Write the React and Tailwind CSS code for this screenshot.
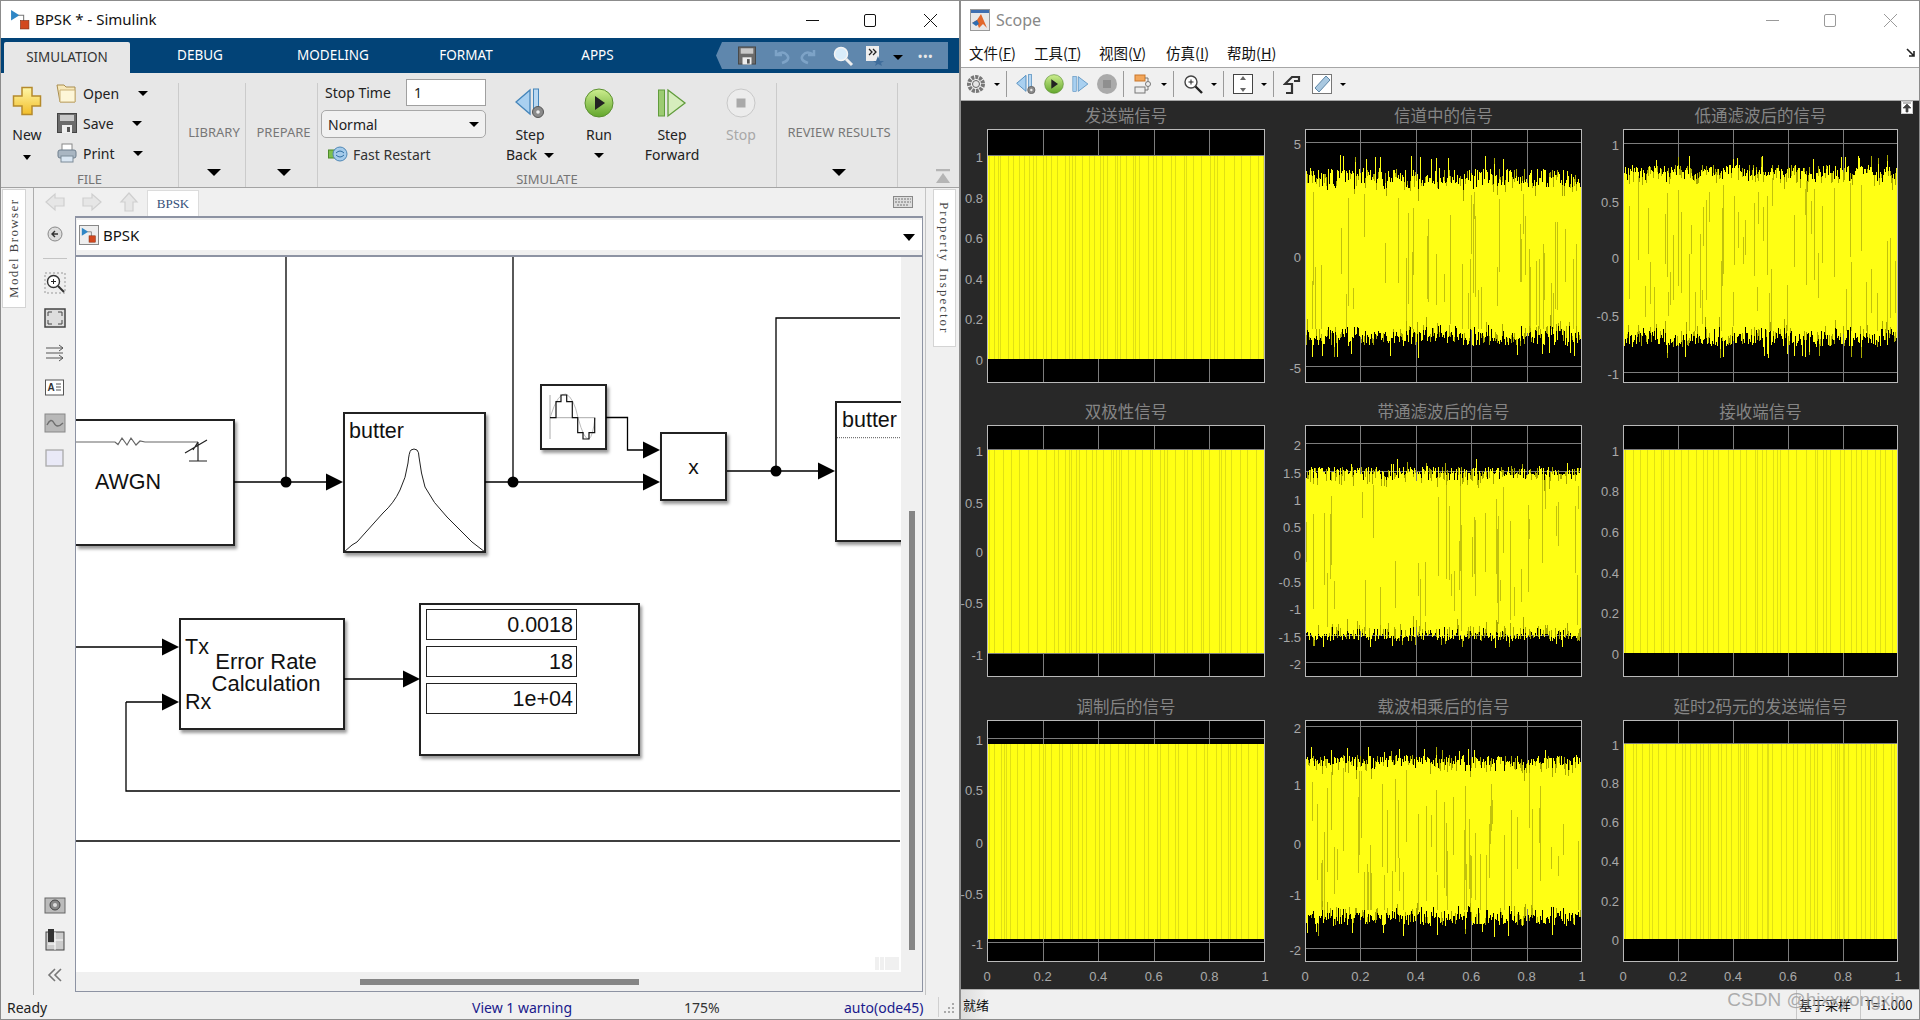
import { useMemo } from "react";

const rng = (seed) => {
    let s = seed;
    return () => {
        s = (s * 16807) % 2147483647;
        return s / 2147483647;
    };
};

const Caret = ({ className = "border-x-[5px] border-t-[5px]" }) => (
    <span className={`inline-block w-0 h-0 border-x-transparent border-t-black ${className}`} />
);

const BigCaret = () => <Caret className="border-x-[7px] border-t-[7px]" />;

/* ---------- icons ---------- */
const SimulinkLogo = ({ s = 20 }) => (
    <svg width={s} height={s} viewBox="0 0 20 20">
        <path d="M1 1 L9 6 L1 11 Z" fill="#2f86c5" />
        <path d="M8 6 H13 V12" stroke="#777" fill="none" />
        <rect x="10" y="11" width="8" height="8" fill="#d2481f" stroke="#7d2a10" strokeWidth="0.6" />
    </svg>
);

const MatlabLogo = () => (
    <svg width="20" height="22" viewBox="0 0 20 22">
        <rect x="0.5" y="0.5" width="19" height="21" fill="#e8e8e8" stroke="#999" />
        <rect x="1" y="1" width="18" height="3" fill="#3f6fb0" />
        <path d="M2 14 L7 11 L11 5 L17 19 L13 15 L9 19 L7 14 Z" fill="#e2672a" />
        <path d="M2 14 L7 11 L9 15 L6 17 Z" fill="#2f6db0" />
    </svg>
);

const WinControls = ({ color }) => (
    <div className="flex items-center">
        <svg width="58" height="16" viewBox="0 0 58 16"><path d="M0 8.5 H13" stroke={color} /></svg>
        <svg width="59" height="16" viewBox="0 0 59 16"><rect x="0.5" y="2.5" width="11" height="12" rx="1.5" fill="none" stroke={color} /></svg>
        <svg width="24" height="16" viewBox="0 0 24 16"><path d="M1 2 L14 15 M14 2 L1 15" stroke={color} /></svg>
    </div>
);

const NewIcon = () => (
    <svg width="30" height="30" viewBox="0 0 30 30">
        <defs>
            <linearGradient id="plus" x1="0" y1="0" x2="0" y2="1">
                <stop offset="0" stopColor="#fff7a8" />
                <stop offset="1" stopColor="#f2bd28" />
            </linearGradient>
        </defs>
        <path d="M10 1.5 H20 V10 H28.5 V20 H20 V28.5 H10 V20 H1.5 V10 H10 Z" fill="url(#plus)" stroke="#b58a2c" strokeWidth="1.5" />
    </svg>
);

const FolderIcon = () => (
    <svg width="21" height="19" viewBox="0 0 21 19">
        <path d="M1 1 H8 L10 3 H19 V18 H4 Z" fill="#f7e8ba" stroke="#a98d4f" />
        <path d="M4 6 H19 V18 H4 Z" fill="#fdf6d8" stroke="#c9b077" />
    </svg>
);

const SaveIcon = ({ w = 20, h = 20 }) => (
    <svg width={w} height={h} viewBox="0 0 20 20">
        <rect x="0.5" y="0.5" width="19" height="19" fill="#6b6b6b" stroke="#444" />
        <rect x="3" y="2" width="14" height="6" fill="#c9c9c9" />
        <rect x="5" y="12" width="10" height="8" fill="#eee" />
        <rect x="10" y="14" width="3" height="5" fill="#555" />
    </svg>
);

const PrintIcon = () => (
    <svg width="20" height="20" viewBox="0 0 20 20">
        <rect x="5" y="1" width="10" height="7" fill="#fff" stroke="#888" />
        <rect x="1" y="7" width="18" height="8" rx="2" fill="#a9b6c2" stroke="#6f7f8d" />
        <rect x="4" y="13" width="12" height="6" fill="#d9e6f2" stroke="#7d8b98" />
    </svg>
);

const FastRestartIcon = () => (
    <svg width="20" height="18" viewBox="0 0 20 18">
        <rect x="0.5" y="5" width="6" height="8" fill="#7fbf4d" stroke="#4d8a2b" />
        <circle cx="12" cy="9" r="7" fill="#a5cbea" stroke="#4f87b5" />
        <path d="M8 8 Q12 4 16 8 M16 10 Q12 14 8 10" stroke="#2f6da0" fill="none" />
    </svg>
);

const StepBackIcon = ({ w = 30, h = 30 }) => (
    <svg width={w} height={h} viewBox="0 0 30 30">
        <path d="M1 14 L15 2 V26 Z" fill="#a9d0f0" stroke="#4585ba" strokeWidth="1.3" />
        <rect x="18.5" y="1" width="5" height="20" fill="#b9d8f2" stroke="#4585ba" />
        <circle cx="23" cy="24" r="5.5" fill="#8a8a8a" stroke="#555" />
        <circle cx="23" cy="24" r="1.8" fill="#eee" />
    </svg>
);

const RunIcon = ({ s = 30 }) => (
    <svg width={s} height={s} viewBox="0 0 30 30">
        <defs>
            <linearGradient id="run" x1="0" y1="0" x2="0" y2="1">
                <stop offset="0" stopColor="#cdee8f" />
                <stop offset="1" stopColor="#62a62c" />
            </linearGradient>
        </defs>
        <circle cx="15" cy="15" r="14" fill="url(#run)" stroke="#5b9030" />
        <path d="M11 8 L21 15 L11 22 Z" fill="#222" />
    </svg>
);

const StepForwardIcon = ({ w = 30, h = 30, fill = "#d6edbd", stroke = "#619c3c", bar = "#9ccb72" }) => (
    <svg width={w} height={h} viewBox="0 0 30 30">
        <rect x="1.5" y="2" width="6" height="26" fill={bar} stroke={stroke} />
        <path d="M11 2 L28 15 L11 28 Z" fill={fill} stroke={stroke} strokeWidth="1.3" />
    </svg>
);

const StopIcon = () => (
    <svg width="30" height="30" viewBox="0 0 30 30">
        <circle cx="15" cy="15" r="14" fill="#ececec" stroke="#c8c8c8" />
        <rect x="10.5" y="10.5" width="9" height="9" fill="#a9a9a9" />
    </svg>
);

const NavArrow = ({ d }) => (
    <svg width="22" height="22" viewBox="0 0 22 22">
        <path d={d} fill="#e6e6e6" stroke="#cfcfcf" strokeWidth="1.2" />
    </svg>
);

const ToolIcon = ({ children }) => (
    <div className="flex h-[35px] items-center justify-center">
        <svg width="22" height="22" viewBox="0 0 22 22">{children}</svg>
    </div>
);

/* ---------- ribbon ---------- */
const Divider = () => <div className="w-px mt-[10px] bg-[#cbcbcb]" />;

const SectionLabel = ({ children }) => (
    <div className="h-[16px] text-[13px] leading-[16px] text-center text-[#757575]">{children}</div>
);

const FileRow = ({ icon, label, caretW, children }) => (
    <div className="flex items-center h-[30px]">
        <div className="w-[21px] flex justify-center">{icon}</div>
        <span className={`ml-[6px] text-[#222] ${caretW}`}>{label}</span>
        {children}
    </div>
);

const CollapsedSection = ({ width, label }) => (
    <div className={`flex flex-col items-center pt-[49px] pl-[4px] ${width}`}>
        <span className="h-[20px] text-[13px] leading-[20px] text-[#777] whitespace-nowrap">{label}</span>
        <div className="mt-[22px] leading-none"><BigCaret /></div>
    </div>
);

const RunButton = ({ width, icon, line1, line2, disabled }) => (
    <div className={`flex flex-col items-center pt-[15px] text-center ${width} ${disabled ? "text-[#a8a8a8]" : "text-[#222]"}`}>
        <div className="h-[37px]">{icon}</div>
        <div className="h-[20px] leading-[20px]">{line1}</div>
        <div className="h-[20px] leading-[20px] whitespace-nowrap flex items-center justify-center gap-[7px]">{line2}</div>
    </div>
);

const Ribbon = () => (
    <div className="flex h-[115px] bg-[#e7e7e7] border-b border-[#a3a3a3] text-[14px] shrink-0">
        <div className="flex flex-col w-[177px] shrink-0">
            <div className="flex flex-1">
                <div className="flex flex-col items-center w-[52px] pt-[13px]">
                    <NewIcon />
                    <span className="mt-[9px] h-[20px] leading-[20px] text-[#222]">New</span>
                    <div className="mt-[3px] leading-none"><Caret className="border-x-[4px] border-t-[5px]" /></div>
                </div>
                <div className="ml-[3px] pt-[5px]">
                    <FileRow icon={<FolderIcon />} label="Open" caretW="w-[55px]"><Caret /></FileRow>
                    <FileRow icon={<SaveIcon />} label="Save" caretW="w-[49px]"><Caret /></FileRow>
                    <FileRow icon={<PrintIcon />} label="Print" caretW="w-[50px]"><Caret /></FileRow>
                </div>
            </div>
            <SectionLabel>FILE</SectionLabel>
        </div>
        <Divider />
        <CollapsedSection width="w-[66px]" label="LIBRARY" />
        <Divider />
        <CollapsedSection width="w-[71px]" label="PREPARE" />
        <Divider />
        <div className="flex flex-col w-[458px] shrink-0">
            <div className="flex flex-1">
                <div className="w-[165px] ml-[3px] pt-[6px] shrink-0">
                    <div className="flex items-center h-[27px]">
                        <span className="ml-[4px] w-[81px] text-[#222] whitespace-nowrap">Stop Time</span>
                        <div className="w-[80px] h-[27px] pl-[7px] leading-[25px] bg-white border border-[#a0a0a0] text-[#222]">1</div>
                    </div>
                    <div className="flex items-center justify-between h-[28px] mt-[4px] px-[6px] rounded-[5px] border border-[#a8a8a8] bg-[#f1f1f1] text-[#222]">
                        Normal
                        <Caret />
                    </div>
                    <div className="flex items-center h-[20px] mt-[6px] pl-[7px]">
                        <FastRestartIcon />
                        <span className="ml-[5px] text-[#333]">Fast Restart</span>
                    </div>
                </div>
                <div className="w-[9px] shrink-0" />
                <RunButton width="w-[70px]" icon={<StepBackIcon />} line1="Step" line2={<>Back<Caret /></>} />
                <RunButton width="w-[68px]" icon={<RunIcon />} line1="Run" line2={<Caret />} />
                <RunButton width="w-[78px]" icon={<StepForwardIcon />} line1="Step" line2="Forward" />
                <RunButton width="w-[60px]" icon={<StopIcon />} line1="Stop" disabled />
            </div>
            <SectionLabel>SIMULATE</SectionLabel>
        </div>
        <Divider />
        <CollapsedSection width="w-[120px]" label="REVIEW RESULTS" />
        <Divider />
        <div className="flex-1 flex justify-end items-end pr-[8px] pb-[3px]">
            <svg width="16" height="15" viewBox="0 0 16 15">
                <path d="M1 1 H15" stroke="#b5b5b5" strokeWidth="2.5" />
                <path d="M8 4 L15 14 H1 Z" fill="#b5b5b5" />
            </svg>
        </div>
    </div>
);

const QuickAccess = () => (
    <div className="w-[232px] h-[27px] mt-[4px] mr-[11px] bg-[#5f87ad] flex items-center [clip-path:polygon(6px_0,100%_0,100%_100%,6px_100%,0_50%)]">
        <div className="ml-[22px]"><SaveIcon w={18} h={19} /></div>
        <svg className="ml-[15px]" width="50" height="18" viewBox="0 0 50 18" fill="none" stroke="#7da3c7" strokeWidth="2.5">
            <path d="M5 3 V8 H11 M5 8 Q12 3 16 8 T11 16" />
            <path d="M43 3 V8 H37 M43 8 Q36 3 32 8 T37 16" />
        </svg>
        <svg className="ml-[11px]" width="22" height="22" viewBox="0 0 22 22" fill="none">
            <circle cx="9" cy="9" r="6.5" fill="#d8ecfa" stroke="#f4f4f4" strokeWidth="1.5" />
            <path d="M14 14 L20 20" stroke="#eee" strokeWidth="3" />
        </svg>
        <svg className="ml-[11px]" width="20" height="21" viewBox="0 0 20 21">
            <rect x="1" y="1" width="13" height="15" fill="#eee" />
            <path d="M4 4 L7 7 L4 10 M8 4 L11 7 L8 10" stroke="#222" fill="none" strokeWidth="1.3" />
            <path d="M13 11 L15 16 L19 16 L16 18 L17 21 L13 19 L10 21 L11 18 L8 16 L11 16 Z" fill="#3f6d9b" />
        </svg>
        <div className="ml-[8px] leading-none"><Caret /></div>
        <span className="ml-[15px] text-[#e8e8e8] text-[11px] font-bold leading-none tracking-[1px]">•••</span>
    </div>
);

/* ---------- block diagram ---------- */
const blockCls = "absolute bg-white border-2 border-[#222] shadow-[2px_3px_3px_rgba(0,0,0,0.4)]";
const blockText = "absolute text-[21.5px] leading-none text-[#111] font-['Liberation_Sans',Arial,sans-serif] whitespace-nowrap";

const Arrow = ({ x, y }) => <path d={`M${x - 17} ${y - 8.5} L${x} ${y} L${x - 17} ${y + 8.5} Z`} fill="#000" />;
const Dot = ({ x, y }) => <circle cx={x} cy={y} r="5.5" fill="#000" />;

const DisplayRow = ({ value }) => (
    <div className="w-[151px] h-[31px] border border-[#222] pr-[3px] text-right text-[21.5px] leading-[31px] text-[#111]">{value}</div>
);

const Diagram = () => (
    <div className="relative flex-1 overflow-hidden bg-white font-['Liberation_Sans',Arial,sans-serif]">
        <div className={`${blockCls} left-0 top-[162px] w-[159px] h-[127px] border-l-0`} />
        <div className={`${blockText} left-[19px] top-[215px]`}>AWGN</div>
        <div className={`${blockCls} left-[267px] top-[155px] w-[143px] h-[141px]`}>
            <span className={`${blockText} left-[4px] top-[7px]`}>butter</span>
        </div>
        <div className={`${blockCls} left-[464px] top-[127px] w-[67px] h-[66px]`} />
        <div className={`${blockCls} left-[584px] top-[175px] w-[67px] h-[69px] flex items-center justify-center text-[21px] text-[#111]`}>x</div>
        <div className={`${blockCls} left-[759px] top-[144px] w-[100px] h-[141px]`}>
            <span className={`${blockText} left-[5px] top-[7px]`}>butter</span>
        </div>
        <div className={`${blockCls} left-[103px] top-[361px] w-[166px] h-[112px]`}>
            <span className={`${blockText} left-[4px] top-[17px]`}>Tx</span>
            <span className={`${blockText} left-[4px] top-[72px]`}>Rx</span>
            <div className="absolute left-[29px] top-[31px] w-[112px] text-center text-[22px] leading-[22px] text-[#111]">
                Error Rate<br />Calculation
            </div>
        </div>
        <div className={`${blockCls} left-[343px] top-[346px] w-[221px] h-[153px] flex flex-col gap-[6px] pl-[5px] pt-[4px]`}>
            <DisplayRow value="0.0018" />
            <DisplayRow value="18" />
            <DisplayRow value="1e+04" />
        </div>
        <div className="absolute right-[2px] bottom-[2px] flex gap-px">
            <div className="w-[4px] h-[13px] bg-[#f0f0f0]" />
            <div className="w-[4px] h-[13px] bg-[#f0f0f0]" />
            <div className="w-[14px] h-[13px] bg-[#f0f0f0]" />
        </div>
        <svg className="absolute inset-0" width="824" height="715" viewBox="76 257 824 715" fill="none">
            <g stroke="#000" strokeWidth="1.3">
                <path d="M286 257 V482 M234 482 H330" />
                <path d="M513 257 V482 M485 482 H648" />
                <path d="M606 417.5 H627.5 V450 H648" />
                <path d="M727 471 H822 M776 471 V318 H900" />
                <path d="M76 647 H165 M126 702 H165 M126 702 V791 H900 M76 841 H900" />
                <path d="M344 679 H405" />
            </g>
            <Dot x={286} y={482} />
            <Dot x={513} y={482} />
            <Dot x={776} y={471} />
            <Arrow x={343} y={482} />
            <Arrow x={660} y={482} />
            <Arrow x={660} y={450} />
            <Arrow x={835} y={471} />
            <Arrow x={179} y={647} />
            <Arrow x={179} y={702} />
            <Arrow x={420} y={679} />
            {/* AWGN channel glyph */}
            <path d="M76 442 H115 L118 444.5 L122 438 L127 445 L131 438 L136 445 L140 441 L145 442 H198" stroke="#666" strokeWidth="1.2" />
            <path d="M185 453 L207 440 M198 442 V461 M189 461 H207 M193 450 L198 442" stroke="#222" strokeWidth="1.2" />
            {/* butter response */}
            <path d="M344 552 L352 545 L357 542 L383 513 Q394 503 400 490 Q406 478 408 463 Q409 452 411 450 Q414 448 417 450 Q419 452 419 457 Q421 474 425 487 Q433 503 447 517 L472 542 L485 552" stroke="#222" strokeWidth="1" />
            {/* quantized sine */}
            <path d="M550 395 V439 M550 417.7 H594.7" stroke="#aaa" />
            <path d="M550 417.7 Q558 392 566 394 Q574 398 578 417.7 Q584 440 589 439 Q593 436 595 417.7" stroke="#bbb" />
            <path d="M550 417.7 H556 V401.7 H561 V395 H566.7 V401.7 H572.3 V417.7 H577.7 V432.7 H583 V439 H589 V432.7 H594.7 V417.7" stroke="#111" strokeWidth="1.2" />
            <path d="M837 437.7 H900" stroke="#555" strokeDasharray="1 1" />
        </svg>
    </div>
);

/* ---------- simulink window ---------- */
const SimulinkWindow = () => (
    <div className="flex flex-col w-[960px] h-[1020px] border border-[#8c8c8c] bg-[#f0f0f0] text-[#111]">
        <div className="flex items-center h-[37px] bg-white pl-[9px] pr-[12px] shrink-0">
            <SimulinkLogo s={21} />
            <span className="ml-[4px] text-[15px]">BPSK * - Simulink</span>
            <div className="ml-auto"><WinControls color="#111" /></div>
        </div>
        <div className="flex h-[35px] bg-[#024377] shrink-0 text-[13.5px] text-white">
            <div className="w-[126px] h-[31px] ml-[3px] mt-[4px] bg-[#e7e7e7] rounded-t-[2px] text-[#333] text-center leading-[31px]">SIMULATION</div>
            <div className="flex leading-[35px]">
                <span className="w-[140px] text-center">DEBUG</span>
                <span className="w-[126px] text-center">MODELING</span>
                <span className="w-[140px] text-center">FORMAT</span>
                <span className="w-[123px] text-center">APPS</span>
            </div>
            <div className="ml-auto"><QuickAccess /></div>
        </div>
        <Ribbon />
        <div className="flex flex-1 min-h-0">
            <div className="w-[33px] border-r border-[#adadad] shrink-0 pl-px pt-[1px]">
                <div className="w-[24px] h-[119px] bg-white border border-[#d4d4d4] flex items-center justify-center [writing-mode:vertical-rl] rotate-180 font-['Liberation_Serif',serif] text-[13px] tracking-[1.4px] text-[#444]">
                    Model Browser
                </div>
            </div>
            <div className="flex flex-col flex-1 min-w-0 pb-[3px]">
                <div className="flex items-end h-[28px] shrink-0 pl-[10px] pr-[12px]">
                    <div className="flex items-center gap-[15px] self-center">
                        <NavArrow d="M2 11 L11 3 V7 H20 V15 H11 V19 Z" />
                        <NavArrow d="M20 11 L11 3 V7 H2 V15 H11 V19 Z" />
                        <NavArrow d="M11 2 L19 11 H15 V20 H7 V11 H3 Z" />
                    </div>
                    <div className="ml-[7px] w-[52px] h-[26px] bg-white border-x border-t border-[#dcdcdc] text-center leading-[26px] text-[13px] text-[#35507a] font-['Liberation_Serif',serif]">BPSK</div>
                    <svg className="ml-auto self-center" width="20" height="12" viewBox="0 0 20 12">
                        <rect x="0.5" y="0.5" width="19" height="11" fill="#ddd" stroke="#888" />
                        <path d="M2 3 H18 M2 6 H18 M4 9 H16" stroke="#777" strokeDasharray="2 1" />
                    </svg>
                </div>
                <div className="flex flex-1 min-h-0">
                    <div className="flex flex-col w-[41px] shrink-0">
                        <div className="flex h-[36px] items-center justify-center">
                            <svg width="16" height="16" viewBox="0 0 16 16">
                                <circle cx="8" cy="8" r="7" fill="#ddd" stroke="#888" />
                                <path d="M11 8 H5 M8 5 L5 8 L8 11" stroke="#333" fill="none" strokeWidth="1.4" />
                            </svg>
                        </div>
                        <div className="w-[24px] h-px mx-auto mt-[6px] mb-[6px] bg-[#c4c4c4]" />
                        <ToolIcon>
                            <rect x="1" y="1" width="20" height="20" fill="#eee" stroke="#999" strokeDasharray="2 2" />
                            <circle cx="9.5" cy="9.5" r="6" fill="#fff" stroke="#333" strokeWidth="1.4" />
                            <path d="M7 9.5 H12 M9.5 7 V12" stroke="#222" />
                            <path d="M14 14 L20 20" stroke="#333" strokeWidth="2" />
                        </ToolIcon>
                        <ToolIcon>
                            <rect x="1" y="2" width="20" height="18" fill="#ddd" stroke="#444" strokeWidth="1.5" />
                            <path d="M4 5 L8 5 M4 5 V9 M18 5 H14 M18 5 V9 M4 17 H8 M4 17 V13 M18 17 H14 M18 17 V13" stroke="#444" />
                        </ToolIcon>
                        <ToolIcon>
                            <path d="M2 6 H19 M15 3 L19 6 L15 9 M2 11 H19 M2 16 H19 M15 13 L19 16 L15 19" stroke="#555" fill="none" />
                        </ToolIcon>
                        <ToolIcon>
                            <rect x="1.5" y="3" width="18" height="15" fill="#fff" stroke="#555" />
                            <text x="3.5" y="14" fontSize="10" fontWeight="700" fill="#333" fontFamily="Liberation Sans">A</text>
                            <path d="M12 7 H17 M12 10 H17 M12 13 H17" stroke="#555" />
                        </ToolIcon>
                        <ToolIcon>
                            <rect x="1" y="2" width="20" height="18" fill="#b8b8b8" stroke="#888" />
                            <path d="M3 13 Q7 5 10 11 T19 11" stroke="#6e6e6e" fill="none" strokeWidth="1.4" />
                        </ToolIcon>
                        <ToolIcon>
                            <rect x="2" y="3" width="17" height="16" fill="#e9e9f7" stroke="#aaa" strokeWidth="1.3" />
                        </ToolIcon>
                        <div className="mt-auto">
                            <ToolIcon>
                                <rect x="1" y="4" width="20" height="15" fill="#bbb" stroke="#666" />
                                <circle cx="11" cy="11" r="5" fill="#888" stroke="#444" />
                                <circle cx="11" cy="11" r="2" fill="#ddd" />
                            </ToolIcon>
                            <ToolIcon>
                                <rect x="2" y="3" width="18" height="18" fill="#ccc" stroke="#444" />
                                <rect x="4" y="0" width="6" height="13" fill="#333" />
                                <path d="M11 11 H19 M11 3 V21 M4 15 H11" stroke="#fff" />
                            </ToolIcon>
                            <ToolIcon>
                                <path d="M11 5 L5 11 L11 17 M17 5 L11 11 L17 17" stroke="#777" fill="none" strokeWidth="1.6" />
                            </ToolIcon>
                        </div>
                    </div>
                    <div className="flex flex-col flex-1 min-w-0 border-x border-b border-t-2 border-[#8d93a3] mr-[2px]">
                        <div className="h-[37px] pt-[2px] pb-[5px] shrink-0 pl-[1px]">
                            <div className="flex items-center h-full bg-white pl-[2px] pr-[7px]">
                                <div className="flex items-center justify-center w-[20px] h-[20px] bg-[#eee] border border-[#888]">
                                    <SimulinkLogo s={16} />
                                </div>
                                <span className="ml-[4px] text-[15px] text-[#111]">BPSK</span>
                                <div className="ml-auto leading-none"><Caret className="border-x-[6px] border-t-[7px]" /></div>
                            </div>
                        </div>
                        <div className="h-[2px] bg-[#8d93a3] shrink-0" />
                        <div className="flex flex-1 min-h-0">
                            <div className="flex flex-col flex-1 min-w-0">
                                <Diagram />
                                <div className="h-[19px] shrink-0 pt-[7px] pl-[284px]">
                                    <div className="w-[279px] h-[6px] bg-[#868686]" />
                                </div>
                            </div>
                            <div className="w-[21px] shrink-0 pl-[8px] pt-[254px]">
                                <div className="w-[6px] h-[439px] bg-[#868686]" />
                            </div>
                        </div>
                    </div>
                </div>
            </div>
            <div className="w-[34px] shrink-0 border-l border-[#c4c4c4] pl-[7px] pt-[1px]">
                <div className="w-[23px] h-[158px] bg-white border border-[#d4d4d4] flex items-center justify-center [writing-mode:vertical-rl] font-['Liberation_Serif',serif] text-[13px] tracking-[2px] text-[#444]">
                    Property Inspector
                </div>
            </div>
        </div>
        <div className="flex items-center h-[24px] shrink-0 text-[14px] pl-[6px] pr-[3px]">
            <span className="w-[465px] text-[#222]">Ready</span>
            <span className="w-[212px] text-[#1a1a8c]">View 1 warning</span>
            <span className="w-[160px] text-[#333]">175%</span>
            <span className="w-[94px] text-[#1a1a8c]">auto(ode45)</span>
            <div className="w-px h-[20px] bg-[#d0d0d0]" />
            <svg className="ml-auto" width="12" height="12" viewBox="0 0 12 12" fill="#aaa">
                <rect x="8" y="2" width="2" height="2" /><rect x="4" y="6" width="2" height="2" /><rect x="8" y="6" width="2" height="2" />
                <rect x="0" y="10" width="2" height="2" /><rect x="4" y="10" width="2" height="2" /><rect x="8" y="10" width="2" height="2" />
            </svg>
        </div>
    </div>
);

/* ---------- scope ---------- */
const noisePaths = (w, top, bot, spTop, spBot, seed) => {
    const r = rng(seed);
    let main = "";
    let olive = "";
    let inner = "";
    for (let x = 0; x < w; x++) {
        let t = top - r() * (top - spTop) * 0.55;
        let b = bot + r() * (spBot - bot) * 0.55;
        if (r() < 0.05) t = spTop + r() * 5;
        if (r() < 0.05) b = spBot - r() * 5;
        if (r() < 0.12) t = top + r() * 6;
        if (r() < 0.12) b = bot - r() * 6;
        main += `M${x + 0.5} ${t.toFixed(1)}V${b.toFixed(1)}`;
        if (r() < 0.3) olive += `M${x + 0.5} ${t.toFixed(1)}V${(t + 3 + r() * 9).toFixed(1)}`;
        if (r() < 0.3) olive += `M${x + 0.5} ${(b - 3 - r() * 9).toFixed(1)}V${b.toFixed(1)}`;
        if (r() < 0.22) {
            const y0 = top + r() * (bot - top) * 0.75;
            const y1 = Math.min(y0 + 20 + r() * 90, bot - 2);
            inner += `M${x + 0.5} ${y0.toFixed(1)}V${y1.toFixed(1)}`;
        }
    }
    return { main, olive, inner };
};

const stripePath = (w, y1, y2, seed) => {
    const r = rng(seed);
    let d = "";
    let x = 2 + r() * 4;
    while (x < w - 1) {
        d += `M${Math.round(x) + 0.5} ${y1}V${y2}`;
        x += 1.5 + r() * 8;
    }
    return d;
};

const Chart = ({ w, h, top, ticks, square, noise, seed, xLabels }) => {
    const paths = useMemo(
        () => (noise ? noisePaths(w, noise[0] - top, noise[1] - top, noise[2] - top, noise[3] - top, seed) : null),
        [noise, w, top, seed]
    );
    const stripes = useMemo(
        () => (square ? stripePath(w, square[0] - top, square[1] - top, seed) : ""),
        [square, w, top, seed]
    );
    return (
        <svg width={w} height={h} viewBox={`0 0 ${w} ${h}`} className="block overflow-visible font-['Liberation_Sans',Arial,sans-serif]">
            <rect width={w} height={h} fill="#000" />
            <g stroke="#7c7c7c" shapeRendering="crispEdges">
                {[0.2, 0.4, 0.6, 0.8].map((f) => (
                    <path key={f} d={`M${Math.round(w * f) + 0.5} 0V${h}`} />
                ))}
                {ticks.map(([label, y]) => (
                    <path key={label} d={`M0 ${y - top - 1.5}H${w}`} />
                ))}
            </g>
            {square && (
                <g shapeRendering="crispEdges">
                    <rect y={square[0] - top} width={w} height={square[1] - square[0]} fill="#ffff14" />
                    <path d={stripes} stroke="#e0e015" />
                </g>
            )}
            {paths && (
                <g shapeRendering="crispEdges" fill="none">
                    <path d={paths.main} stroke="#ffff14" />
                    <path d={paths.inner} stroke="#c2c20c" />
                    <path d={paths.olive} stroke="#a8a800" />
                </g>
            )}
            <rect x="0.5" y="0.5" width={w - 1} height={h - 1} fill="none" stroke="#b9b9b9" shapeRendering="crispEdges" />
            <g fill="#a8a8a8" fontSize="13">
                {ticks.map(([label, y]) => (
                    <text key={label} x="-4" y={y - top + 4.5} textAnchor="end">{label}</text>
                ))}
                {xLabels && ["0", "0.2", "0.4", "0.6", "0.8", "1"].map((l, i) => (
                    <text key={l} x={i * 0.2 * w} y={h + 19} textAnchor="middle">{l}</text>
                ))}
            </g>
        </svg>
    );
};

const ROWS = [
    {
        cls: "mt-[3px]",
        h: 254,
        top: 129,
        plots: [
            { title: "发送端信号", w: 278, seed: 11, square: [156, 359], ticks: [["1", 157], ["0.8", 198], ["0.6", 238], ["0.4", 279], ["0.2", 319], ["0", 360]] },
            { title: "信道中的信号", w: 277, seed: 23, noise: [184, 331, 155, 358], ticks: [["5", 144], ["0", 257], ["-5", 368]] },
            { title: "低通滤波后的信号", w: 275, seed: 37, noise: [176, 333, 155, 358], ticks: [["1", 145], ["0.5", 202], ["0", 258], ["-0.5", 316], ["-1", 374]] },
        ],
    },
    {
        cls: "mt-[18px]",
        h: 252,
        top: 425,
        plots: [
            { title: "双极性信号", w: 278, seed: 41, square: [450, 653], ticks: [["1", 451], ["0.5", 503], ["0", 552], ["-0.5", 603], ["-1", 655]] },
            { title: "带通滤波后的信号", w: 277, seed: 53, noise: [475, 633, 459, 648], ticks: [["2", 445], ["1.5", 473], ["1", 500], ["0.5", 527], ["0", 555], ["-0.5", 582], ["-1", 609], ["-1.5", 637], ["-2", 664]] },
            { title: "接收端信号", w: 275, seed: 67, square: [450, 653], ticks: [["1", 451], ["0.8", 491], ["0.6", 532], ["0.4", 573], ["0.2", 613], ["0", 654]] },
        ],
    },
    {
        cls: "mt-[19px]",
        h: 242,
        top: 720,
        xLabels: true,
        plots: [
            { title: "调制后的信号", w: 278, seed: 79, square: [744, 939], ticks: [["1", 740], ["0.5", 790], ["0", 843], ["-0.5", 894], ["-1", 944]] },
            { title: "载波相乘后的信号", w: 277, seed: 83, noise: [765, 912, 747, 937], ticks: [["2", 728], ["1", 785], ["0", 844], ["-1", 895], ["-2", 950]] },
            { title: "延时2码元的发送端信号", w: 275, seed: 97, square: [744, 939], ticks: [["1", 745], ["0.8", 783], ["0.6", 822], ["0.4", 861], ["0.2", 901], ["0", 940]] },
        ],
    },
];

const MENU = [
    ["文件(", "F", ")", "w-[65px]"],
    ["工具(", "T", ")", "w-[65px]"],
    ["视图(", "V", ")", "w-[67px]"],
    ["仿真(", "I", ")", "w-[61px]"],
    ["帮助(", "H", ")", "w-[60px]"],
];

const ToolSep = () => <div className="w-px h-[26px] bg-[#9a9a9a] ml-[6px] mr-[9px]" />;
const MiniCaret = () => <Caret className="border-x-[3px] border-t-[3px] ml-[8px]" />;

const ScopeToolbar = () => (
    <div className="flex items-center h-[34px] shrink-0 bg-[#f0f0f0] border-y border-[#a6a6a6] pl-[5px]">
        <svg width="20" height="20" viewBox="0 0 20 20">
            <circle cx="10" cy="10" r="7" fill="none" stroke="#777" strokeWidth="4" strokeDasharray="3 1" />
            <circle cx="10" cy="10" r="3.5" fill="#e6e6e6" stroke="#666" />
        </svg>
        <MiniCaret />
        <ToolSep />
        <div className="flex items-center gap-[8px]">
            <StepBackIcon w={20} h={20} />
            <RunIcon s={20} />
            <StepForwardIcon w={17} h={20} fill="#a9d0f0" stroke="#4585ba" bar="#a9d0f0" />
            <svg width="20" height="20" viewBox="0 0 20 20">
                <circle cx="10" cy="10" r="10" fill="#aaa" />
                <rect x="6" y="6" width="8" height="8" fill="#8f8f8f" />
            </svg>
        </div>
        <ToolSep />
        <svg width="20" height="20" viewBox="0 0 20 20" fill="none">
            <rect x="2" y="1" width="10" height="6" fill="#f2a65a" stroke="#c9762a" />
            <rect x="2" y="13" width="10" height="6" fill="#eee" stroke="#777" />
            <circle cx="15" cy="10" r="2.5" fill="#eee" stroke="#777" />
            <path d="M12 4 H15 V7.5 M15 12.5 V16 H12" stroke="#777" />
        </svg>
        <MiniCaret />
        <ToolSep />
        <svg width="20" height="20" viewBox="0 0 20 20" fill="none">
            <circle cx="8" cy="8" r="6" fill="#fff" stroke="#444" strokeWidth="1.4" />
            <path d="M5.5 8 H10.5 M8 5.5 V10.5" stroke="#222" />
            <path d="M12.5 12.5 L19 19" stroke="#222" strokeWidth="2.4" />
        </svg>
        <MiniCaret />
        <ToolSep />
        <svg width="20" height="20" viewBox="0 0 20 20">
            <rect x="0.5" y="0.5" width="19" height="19" fill="#fff" stroke="#444" />
            <path d="M10 2 L13 6 H7 Z M10 18 L13 14 H7 Z" fill="#666" />
        </svg>
        <MiniCaret />
        <ToolSep />
        <svg width="18" height="20" viewBox="0 0 18 20" fill="none" stroke="#333" strokeWidth="2.2">
            <path d="M3 19 H9 V10 H2 L9 3 H16 V7 H11" />
        </svg>
        <svg className="ml-[11px]" width="20" height="20" viewBox="0 0 20 20">
            <rect x="0.5" y="0.5" width="19" height="19" fill="#fff" stroke="#777" />
            <path d="M3 14 L14 2 L18 6 L7 18 Z" fill="#a9c8e0" stroke="#5d86a6" />
        </svg>
        <MiniCaret />
    </div>
);

const ScopeWindow = () => (
    <div className="flex flex-col w-[960px] h-[1020px] border border-[#8c8c8c] bg-white font-['Noto_Sans','Noto_Sans_CJK_SC',sans-serif]">
        <div className="flex items-center h-[37px] shrink-0 pl-[9px] pr-[12px]">
            <MatlabLogo />
            <span className="ml-[6px] text-[16px] text-[#888]">Scope</span>
            <div className="ml-auto"><WinControls color="#9a9a9a" /></div>
        </div>
        <div className="flex items-center h-[29px] shrink-0 pl-[8px] text-[14.5px] text-[#111] font-['Noto_Sans_CJK_SC',sans-serif]">
            {MENU.map(([a, key, c, width]) => (
                <span key={key} className={`${width} whitespace-nowrap`}>
                    {a}<span className="underline">{key}</span>{c}
                </span>
            ))}
            <svg className="ml-auto mr-[3px]" width="10" height="10" viewBox="0 0 10 10">
                <path d="M1 1 L8 8 M8 3 V8 H3" stroke="#222" fill="none" strokeWidth="1.6" />
            </svg>
        </div>
        <ScopeToolbar />
        <div className="relative flex-1 min-h-0 bg-[#282828] pl-[26px] pt-[1px]">
            <div className="absolute right-[6px] top-0 w-[12px] h-[13px] bg-white border border-[#ccc] flex items-start justify-center">
                <svg width="10" height="11" viewBox="0 0 10 11"><path d="M1 1 H9 M5 2 L9 6 H6 V10 H4 V6 H1 Z" stroke="#444" fill="#444" strokeWidth="0.7" /></svg>
            </div>
            {ROWS.map((row) => (
                <div key={row.top} className={`flex ${row.cls}`}>
                    {row.plots.map((p, i) => (
                        <div key={p.title} className={i === 0 ? "" : i === 1 ? "ml-[40px]" : "ml-[41px]"}>
                            <div className="h-[24px] pb-[3px] flex items-center justify-center text-[16.5px] text-[#858585] font-['Noto_Sans_CJK_SC',sans-serif] whitespace-nowrap">
                                {p.title}
                            </div>
                            <Chart w={p.w} h={row.h} top={row.top} ticks={p.ticks} square={p.square} noise={p.noise} seed={p.seed} xLabels={row.xLabels} />
                        </div>
                    ))}
                </div>
            ))}
        </div>
        <div className="relative flex items-center h-[30px] shrink-0 border-t border-[#b0b0b0] bg-[linear-gradient(90deg,#dcdcdc,#f0f0f0_26px)] text-[13px] text-[#111] font-['Noto_Sans_CJK_SC',sans-serif]">
            <span className="ml-[2px]">就绪</span>
            <div className="ml-auto flex h-full">
                <div className="w-[64px] border-l border-[#c8c8c8] pl-[2px] leading-[29px]">基于采样</div>
                <div className="w-[59px] border-l border-[#c8c8c8] pl-[4px] leading-[29px]">T=1.000</div>
            </div>
            <span className="absolute right-[14px] top-[-4px] text-[19px] text-[#9a9a9a]/80 font-['Liberation_Sans',sans-serif] whitespace-nowrap">CSDN @hjxxyongxin</span>
        </div>
    </div>
);

export default function App() {
    return (
        <div className="flex w-[1920px] h-[1020px] overflow-hidden font-['Noto_Sans','Noto_Sans_CJK_SC',sans-serif]">
            <SimulinkWindow />
            <ScopeWindow />
        </div>
    );
}
